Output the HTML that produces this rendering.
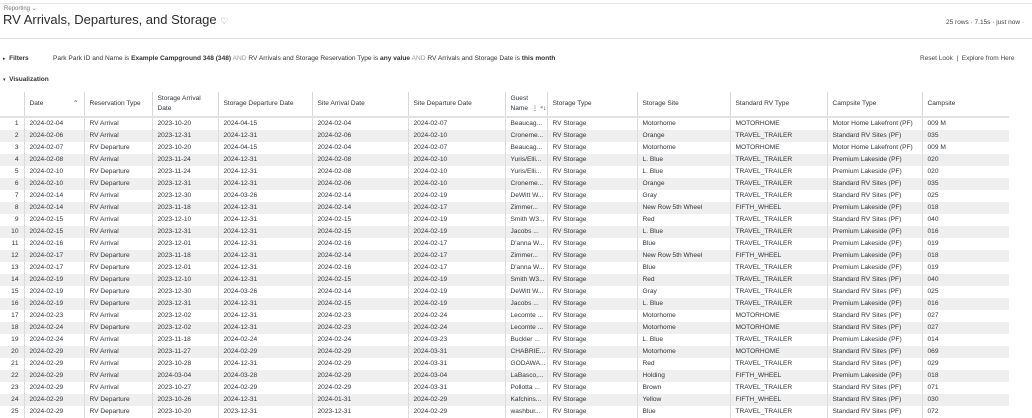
<!DOCTYPE html>
<html><head><meta charset="utf-8"><style>
body{margin:0;width:1032px;height:417px;overflow:hidden;background:#fff;font-family:"Liberation Sans",sans-serif;color:#2f353a;position:relative}
.a{position:absolute;white-space:nowrap}
table{position:absolute;left:0;top:92px;border-collapse:collapse;table-layout:fixed;width:1009px;font-size:6.6px}
td,th{padding:0 0 0 5px;overflow:hidden;white-space:nowrap;border-left:1px solid #dcdcdc;height:12px;line-height:12px;text-align:left}
th{font-weight:normal;height:24px;line-height:10px;border-bottom:2px solid #e2e2e2;border-left:1px solid #d8d8d8}
td:first-child,th:first-child{border-left:none;text-align:right;padding:0 5px 0 0}
tbody tr:nth-child(even){background:#efefef}
</style></head><body>
<div class="a" style="left:0;top:3px;width:1032px;height:1px;background:#e6e6e6"></div>
<div class="a" style="left:4px;top:5px;font-size:6px;color:#777">Reporting ⌄</div>
<div class="a" style="left:3px;top:12px;font-size:13px;color:#2b2b2b">RV Arrivals, Departures, and Storage <span style="font-size:9px;color:#888">♡</span></div>
<div class="a" style="left:946px;top:19px;font-size:6.5px;color:#444">25 rows · 7.15s · just now ·</div>
<div class="a" style="left:0;top:38px;width:1032px;height:1px;background:#dfe3e6"></div>
<div class="a" style="left:3px;top:55px;font-size:6.5px;color:#333"><span style="font-size:5px">▸</span>&nbsp;&nbsp;<b>Filters</b></div>
<div class="a" style="left:53px;top:55px;font-size:6.6px;color:#333">Park Park ID and Name is <b>Example Campground 348 (348)</b> <span style="color:#999">AND</span> RV Arrivals and Storage Reservation Type is <b>any value</b> <span style="color:#999">AND</span> RV Arrivals and Storage Date is <b>this month</b></div>
<div class="a" style="left:920px;top:55px;font-size:6.5px;color:#444">Reset Look&nbsp; |&nbsp; Explore from Here</div>
<div class="a" style="left:3px;top:76px;font-size:6.5px;color:#333"><span style="font-size:5px">▾</span>&nbsp;&nbsp;<b>Visualization</b></div>
<table>
<colgroup><col style="width:24px"><col style="width:60px"><col style="width:68px"><col style="width:66px"><col style="width:94px"><col style="width:96px"><col style="width:97px"><col style="width:42px"><col style="width:90px"><col style="width:93px"><col style="width:97px"><col style="width:95px"><col style="width:87px"></colgroup>
<thead><tr><th></th><th>Date <span style="float:right;margin-right:5px">⌃</span></th><th>Reservation Type</th><th>Storage Arrival<br>Date</th><th>Storage Departure Date</th><th>Site Arrival Date</th><th>Site Departure Date</th><th>Guest<br>Name &nbsp;⋮ ⁴↓</th><th>Storage Type</th><th>Storage Site</th><th>Standard RV Type</th><th>Campsite Type</th><th>Campsite</th></tr></thead>
<tbody>
<tr><td>1</td><td>2024-02-04</td><td>RV Arrival</td><td>2023-10-20</td><td>2024-04-15</td><td>2024-02-04</td><td>2024-02-07</td><td>Beaucag...</td><td>RV Storage</td><td>Motorhome</td><td>MOTORHOME</td><td>Motor Home Lakefront (PF)</td><td>009 M</td></tr>
<tr><td>2</td><td>2024-02-06</td><td>RV Arrival</td><td>2023-12-31</td><td>2024-12-31</td><td>2024-02-06</td><td>2024-02-10</td><td>Croneme...</td><td>RV Storage</td><td>Orange</td><td>TRAVEL_TRAILER</td><td>Standard RV Sites (PF)</td><td>035</td></tr>
<tr><td>3</td><td>2024-02-07</td><td>RV Departure</td><td>2023-10-20</td><td>2024-04-15</td><td>2024-02-04</td><td>2024-02-07</td><td>Beaucag...</td><td>RV Storage</td><td>Motorhome</td><td>MOTORHOME</td><td>Motor Home Lakefront (PF)</td><td>009 M</td></tr>
<tr><td>4</td><td>2024-02-08</td><td>RV Arrival</td><td>2023-11-24</td><td>2024-12-31</td><td>2024-02-08</td><td>2024-02-10</td><td>Yuris/Elli...</td><td>RV Storage</td><td>L. Blue</td><td>TRAVEL_TRAILER</td><td>Premium Lakeside (PF)</td><td>020</td></tr>
<tr><td>5</td><td>2024-02-10</td><td>RV Departure</td><td>2023-11-24</td><td>2024-12-31</td><td>2024-02-08</td><td>2024-02-10</td><td>Yuris/Elli...</td><td>RV Storage</td><td>L. Blue</td><td>TRAVEL_TRAILER</td><td>Premium Lakeside (PF)</td><td>020</td></tr>
<tr><td>6</td><td>2024-02-10</td><td>RV Departure</td><td>2023-12-31</td><td>2024-12-31</td><td>2024-02-06</td><td>2024-02-10</td><td>Croneme...</td><td>RV Storage</td><td>Orange</td><td>TRAVEL_TRAILER</td><td>Standard RV Sites (PF)</td><td>035</td></tr>
<tr><td>7</td><td>2024-02-14</td><td>RV Arrival</td><td>2023-12-30</td><td>2024-03-26</td><td>2024-02-14</td><td>2024-02-19</td><td>DeWitt W...</td><td>RV Storage</td><td>Gray</td><td>TRAVEL_TRAILER</td><td>Standard RV Sites (PF)</td><td>025</td></tr>
<tr><td>8</td><td>2024-02-14</td><td>RV Arrival</td><td>2023-11-18</td><td>2024-12-31</td><td>2024-02-14</td><td>2024-02-17</td><td>Zimmer...</td><td>RV Storage</td><td>New Row 5th Wheel</td><td>FIFTH_WHEEL</td><td>Premium Lakeside (PF)</td><td>018</td></tr>
<tr><td>9</td><td>2024-02-15</td><td>RV Arrival</td><td>2023-12-10</td><td>2024-12-31</td><td>2024-02-15</td><td>2024-02-19</td><td>Smith W3...</td><td>RV Storage</td><td>Red</td><td>TRAVEL_TRAILER</td><td>Standard RV Sites (PF)</td><td>040</td></tr>
<tr><td>10</td><td>2024-02-15</td><td>RV Arrival</td><td>2023-12-31</td><td>2024-12-31</td><td>2024-02-15</td><td>2024-02-19</td><td>Jacobs ...</td><td>RV Storage</td><td>L. Blue</td><td>TRAVEL_TRAILER</td><td>Premium Lakeside (PF)</td><td>016</td></tr>
<tr><td>11</td><td>2024-02-16</td><td>RV Arrival</td><td>2023-12-01</td><td>2024-12-31</td><td>2024-02-16</td><td>2024-02-17</td><td>D'anna W...</td><td>RV Storage</td><td>Blue</td><td>TRAVEL_TRAILER</td><td>Premium Lakeside (PF)</td><td>019</td></tr>
<tr><td>12</td><td>2024-02-17</td><td>RV Departure</td><td>2023-11-18</td><td>2024-12-31</td><td>2024-02-14</td><td>2024-02-17</td><td>Zimmer...</td><td>RV Storage</td><td>New Row 5th Wheel</td><td>FIFTH_WHEEL</td><td>Premium Lakeside (PF)</td><td>018</td></tr>
<tr><td>13</td><td>2024-02-17</td><td>RV Departure</td><td>2023-12-01</td><td>2024-12-31</td><td>2024-02-16</td><td>2024-02-17</td><td>D'anna W...</td><td>RV Storage</td><td>Blue</td><td>TRAVEL_TRAILER</td><td>Premium Lakeside (PF)</td><td>019</td></tr>
<tr><td>14</td><td>2024-02-19</td><td>RV Departure</td><td>2023-12-10</td><td>2024-12-31</td><td>2024-02-15</td><td>2024-02-19</td><td>Smith W3...</td><td>RV Storage</td><td>Red</td><td>TRAVEL_TRAILER</td><td>Standard RV Sites (PF)</td><td>040</td></tr>
<tr><td>15</td><td>2024-02-19</td><td>RV Departure</td><td>2023-12-30</td><td>2024-03-26</td><td>2024-02-14</td><td>2024-02-19</td><td>DeWitt W...</td><td>RV Storage</td><td>Gray</td><td>TRAVEL_TRAILER</td><td>Standard RV Sites (PF)</td><td>025</td></tr>
<tr><td>16</td><td>2024-02-19</td><td>RV Departure</td><td>2023-12-31</td><td>2024-12-31</td><td>2024-02-15</td><td>2024-02-19</td><td>Jacobs ...</td><td>RV Storage</td><td>L. Blue</td><td>TRAVEL_TRAILER</td><td>Premium Lakeside (PF)</td><td>016</td></tr>
<tr><td>17</td><td>2024-02-23</td><td>RV Arrival</td><td>2023-12-02</td><td>2024-12-31</td><td>2024-02-23</td><td>2024-02-24</td><td>Lecomte ...</td><td>RV Storage</td><td>Motorhome</td><td>MOTORHOME</td><td>Standard RV Sites (PF)</td><td>027</td></tr>
<tr><td>18</td><td>2024-02-24</td><td>RV Departure</td><td>2023-12-02</td><td>2024-12-31</td><td>2024-02-23</td><td>2024-02-24</td><td>Lecomte ...</td><td>RV Storage</td><td>Motorhome</td><td>MOTORHOME</td><td>Standard RV Sites (PF)</td><td>027</td></tr>
<tr><td>19</td><td>2024-02-24</td><td>RV Arrival</td><td>2023-11-18</td><td>2024-02-24</td><td>2024-02-24</td><td>2024-03-23</td><td>Buckler ...</td><td>RV Storage</td><td>L. Blue</td><td>TRAVEL_TRAILER</td><td>Premium Lakeside (PF)</td><td>014</td></tr>
<tr><td>20</td><td>2024-02-29</td><td>RV Arrival</td><td>2023-11-27</td><td>2024-02-29</td><td>2024-02-29</td><td>2024-03-31</td><td>CHABRIE...</td><td>RV Storage</td><td>Motorhome</td><td>MOTORHOME</td><td>Standard RV Sites (PF)</td><td>069</td></tr>
<tr><td>21</td><td>2024-02-29</td><td>RV Arrival</td><td>2023-10-28</td><td>2024-12-31</td><td>2024-02-29</td><td>2024-03-31</td><td>GODAWA...</td><td>RV Storage</td><td>Red</td><td>TRAVEL_TRAILER</td><td>Standard RV Sites (PF)</td><td>029</td></tr>
<tr><td>22</td><td>2024-02-29</td><td>RV Arrival</td><td>2024-03-04</td><td>2024-03-28</td><td>2024-02-29</td><td>2024-03-04</td><td>LaBasco,...</td><td>RV Storage</td><td>Holding</td><td>FIFTH_WHEEL</td><td>Premium Lakeside (PF)</td><td>018</td></tr>
<tr><td>23</td><td>2024-02-29</td><td>RV Arrival</td><td>2023-10-27</td><td>2024-02-29</td><td>2024-02-29</td><td>2024-03-31</td><td>Pollotta ...</td><td>RV Storage</td><td>Brown</td><td>TRAVEL_TRAILER</td><td>Standard RV Sites (PF)</td><td>071</td></tr>
<tr><td>24</td><td>2024-02-29</td><td>RV Departure</td><td>2023-10-26</td><td>2024-12-31</td><td>2024-01-31</td><td>2024-02-29</td><td>Kafchins...</td><td>RV Storage</td><td>Yellow</td><td>FIFTH_WHEEL</td><td>Standard RV Sites (PF)</td><td>030</td></tr>
<tr><td>25</td><td>2024-02-29</td><td>RV Departure</td><td>2023-10-20</td><td>2023-12-31</td><td>2023-12-31</td><td>2024-02-29</td><td>washbur...</td><td>RV Storage</td><td>Blue</td><td>TRAVEL_TRAILER</td><td>Standard RV Sites (PF)</td><td>072</td></tr>
</tbody></table>
</body></html>
